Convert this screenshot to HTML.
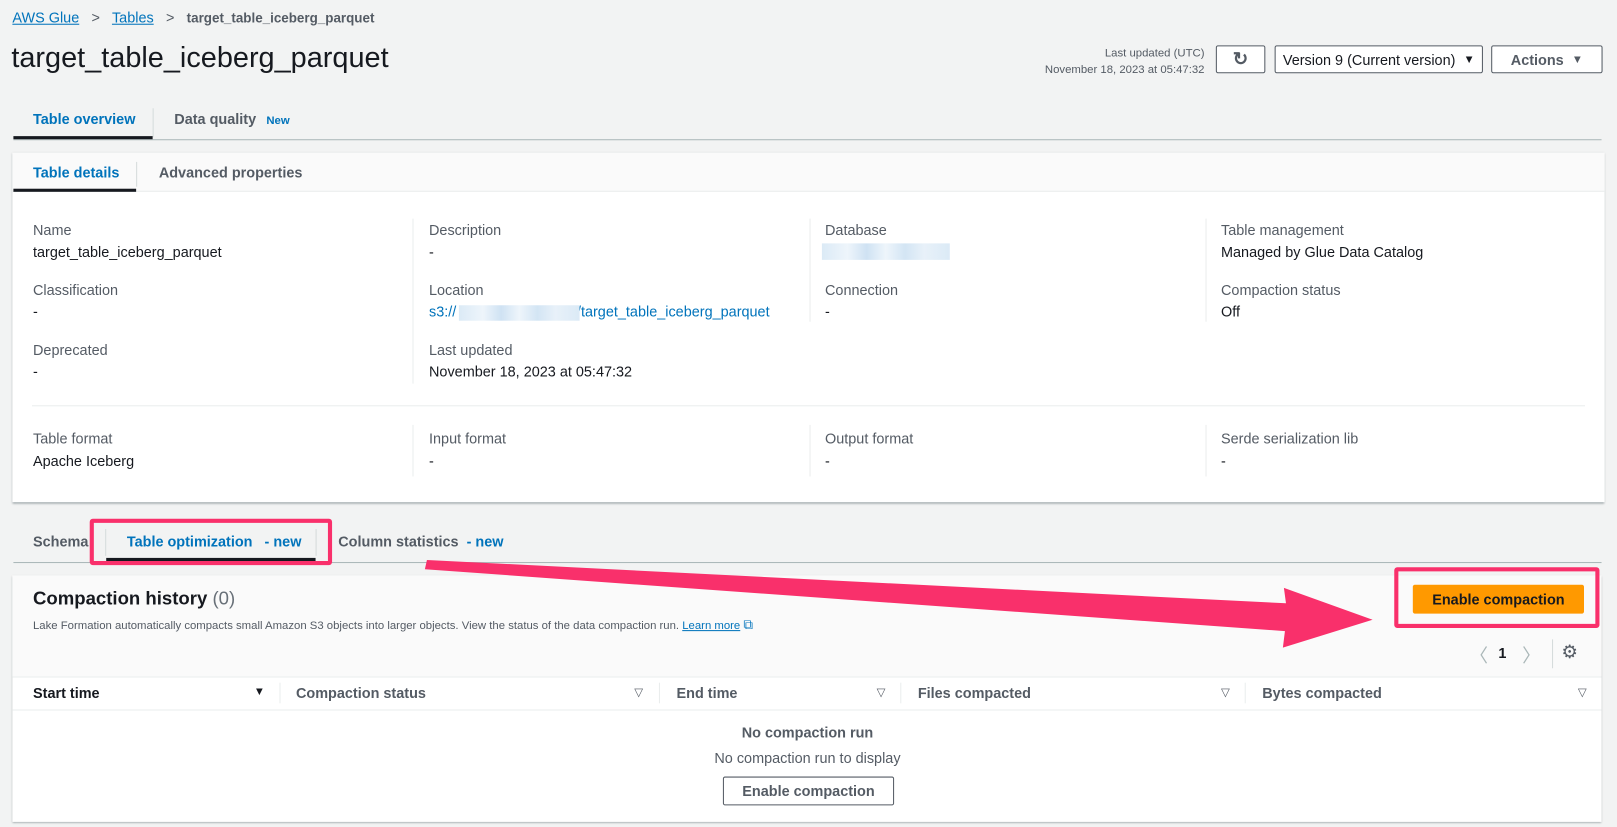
<!DOCTYPE html>
<html><head><meta charset="utf-8"><style>
*{box-sizing:border-box;margin:0;padding:0}
body{width:1617px;height:827px;background:#f2f3f3;font-family:"Liberation Sans",sans-serif;font-size:14px;color:#16191f;position:relative;overflow:hidden}
#w{position:absolute;left:0;top:0;width:1568px;height:802px;transform:scale(1.03125);transform-origin:0 0}
.a{position:absolute;white-space:nowrap}
.lnk{color:#0073bb;text-decoration:underline}
.b{font-weight:bold}
.g{color:#545b64}
.blue{color:#0073bb}
.lbl{color:#545b64;font-size:14px}
.btn{position:absolute;border:1px solid #545b64;background:#fff;border-radius:2px;font-weight:bold;color:#545b64;display:flex;align-items:center;justify-content:center}
.sep{position:absolute;width:1px;background:#d5dbdb}
.blur{position:absolute;background:linear-gradient(90deg,#dbeaf6,#eef5fb 20%,#cfe2f3 35%,#eef5fb 50%,#d3e5f4 65%,#e8f1f9 80%,#dbeaf6);}
</style></head><body><div id="w">
<div class="a" style="left:12px;top:9px"><span class="lnk">AWS Glue</span> <span class="g" style="margin:0 8px">&gt;</span> <span class="lnk">Tables</span> <span class="g" style="margin:0 8px">&gt;</span> <span class="g b" style="font-size:13px">target_table_iceberg_parquet</span></div>
<div class="a" style="left:11px;top:40px;font-size:28px">target_table_iceberg_parquet</div>
<div class="a g" style="right:400px;top:44px;font-size:11px;text-align:right;line-height:16px">Last updated (UTC)<br>November 18, 2023 at 05:47:32</div>
<div class="btn" style="left:1179px;top:44px;width:48px;height:27px;font-size:18px">&#8635;</div>
<div class="btn" style="left:1236px;top:44px;width:202px;height:27px;font-weight:normal;color:#16191f">Version 9 (Current version) &nbsp;<span style="font-size:11px">&#9660;</span></div>
<div class="btn" style="left:1446px;top:44px;width:108px;height:27px">Actions &nbsp;<span style="font-size:11px">&#9660;</span></div>

<div class="a b blue" style="left:32px;top:107px">Table overview</div>
<div class="sep" style="left:148px;top:105px;height:28px"></div>
<div class="a b g" style="left:169px;top:107px">Data quality <span class="blue" style="font-size:11px;margin-left:6px">New</span></div>
<div class="a" style="left:13px;top:135px;width:1540px;height:1px;background:#aab7b8"></div>
<div class="a" style="left:13px;top:132px;width:135px;height:3px;background:#16191f"></div>

<div class="a" style="left:12px;top:148px;width:1544px;height:339px;background:#fff;box-shadow:0 1px 2px rgba(0,28,36,.4);border-top:1px solid #eaeded"></div>
<div class="a" style="left:12px;top:148px;width:1544px;height:38px;background:#fafafa;border-bottom:1px solid #eaeded"></div>
<div class="a b blue" style="left:32px;top:159px">Table details</div>
<div class="sep" style="left:132px;top:157px;height:24px"></div>
<div class="a b g" style="left:154px;top:159px">Advanced properties</div>
<div class="a" style="left:13px;top:183px;width:119px;height:3px;background:#16191f"></div>

<div class="sep" style="left:400px;top:212px;height:160px;background:#eaeded"></div>
<div class="sep" style="left:785px;top:212px;height:100px;background:#eaeded"></div>
<div class="sep" style="left:1169px;top:212px;height:100px;background:#eaeded"></div>
<div class="sep" style="left:400px;top:412px;height:50px;background:#eaeded"></div>
<div class="sep" style="left:785px;top:412px;height:50px;background:#eaeded"></div>
<div class="sep" style="left:1169px;top:412px;height:50px;background:#eaeded"></div>

<div class="a lbl" style="left:32px;top:215px">Name</div><div class="a" style="left:32px;top:236px">target_table_iceberg_parquet</div>
<div class="a lbl" style="left:416px;top:215px">Description</div><div class="a" style="left:416px;top:236px">-</div>
<div class="a lbl" style="left:800px;top:215px">Database</div><div class="blur" style="left:797px;top:236px;width:124px;height:16px"></div>
<div class="a lbl" style="left:1184px;top:215px">Table management</div><div class="a" style="left:1184px;top:236px">Managed by Glue Data Catalog</div>

<div class="a lbl" style="left:32px;top:273px">Classification</div><div class="a" style="left:32px;top:294px">-</div>
<div class="a lbl" style="left:416px;top:273px">Location</div><div class="a blue" style="left:416px;top:294px">s3://<span style="display:inline-block;width:117px"></span>/target_table_iceberg_parquet</div><div class="blur" style="left:445px;top:296px;width:117px;height:15px"></div>
<div class="a lbl" style="left:800px;top:273px">Connection</div><div class="a" style="left:800px;top:294px">-</div>
<div class="a lbl" style="left:1184px;top:273px">Compaction status</div><div class="a" style="left:1184px;top:294px">Off</div>

<div class="a lbl" style="left:32px;top:331px">Deprecated</div><div class="a" style="left:32px;top:352px">-</div>
<div class="a lbl" style="left:416px;top:331px">Last updated</div><div class="a" style="left:416px;top:352px">November 18, 2023 at 05:47:32</div>

<div class="a" style="left:31px;top:393px;width:1506px;height:1px;background:#eaeded"></div>
<div class="a lbl" style="left:32px;top:417px">Table format</div><div class="a" style="left:32px;top:439px">Apache Iceberg</div>
<div class="a lbl" style="left:416px;top:417px">Input format</div><div class="a" style="left:416px;top:439px">-</div>
<div class="a lbl" style="left:800px;top:417px">Output format</div><div class="a" style="left:800px;top:439px">-</div>
<div class="a lbl" style="left:1184px;top:417px">Serde serialization lib</div><div class="a" style="left:1184px;top:439px">-</div>

<div class="a b g" style="left:32px;top:517px">Schema</div>
<div class="sep" style="left:102px;top:513px;height:26px"></div>
<div class="a b blue" style="left:123px;top:517px">Table optimization &nbsp; - new</div>
<div class="sep" style="left:306px;top:513px;height:26px"></div>
<div class="a b g" style="left:328px;top:517px">Column statistics &nbsp;<span class="blue">- new</span></div>
<div class="a" style="left:13px;top:545px;width:1540px;height:1px;background:#aab7b8"></div>
<div class="a" style="left:103px;top:541px;width:203px;height:3px;background:#16191f"></div>
<div class="a" style="left:87px;top:503px;width:235px;height:45px;border:4px solid #f9306b;border-radius:3px"></div>

<div class="a" style="left:12px;top:558px;width:1541px;height:239px;background:#fff;box-shadow:0 1px 2px rgba(0,28,36,.4)"></div>
<div class="a" style="left:12px;top:558px;width:1541px;height:98px;background:#fafafa"></div>
<div class="a b" style="left:32px;top:570px;font-size:18px">Compaction history <span style="font-weight:normal;color:#687078">(0)</span></div>
<div class="a g" style="left:32px;top:598px;font-size:11px">Lake Formation automatically compacts small Amazon S3 objects into larger objects. View the status of the data compaction run. <span class="lnk">Learn more</span> <span class="blue" style="font-size:13px">&#10697;</span></div>
<div class="a" style="left:1370px;top:567px;width:166px;height:28px;background:#ff9900;border-radius:2px;font-weight:bold;font-size:14px;display:flex;align-items:center;justify-content:center">Enable compaction</div>
<div class="a" style="left:1352px;top:550px;width:199px;height:59px;border:4px solid #f9306b;border-radius:3px"></div>
<div class="a" style="left:1425px;top:622px;color:#aab7b8;font-size:18px">&#12296;</div>
<div class="a b" style="left:1453px;top:625px">1</div>
<div class="a" style="left:1476px;top:622px;color:#aab7b8;font-size:18px">&#12297;</div>
<div class="sep" style="left:1505px;top:620px;height:28px"></div>
<div class="a" style="left:1514px;top:622px;font-size:18px;color:#545b64">&#9881;</div>

<div class="a" style="left:12px;top:656px;width:1541px;height:1px;background:#eaeded"></div>
<div class="a" style="left:12px;top:688px;width:1541px;height:1px;background:#eaeded"></div>
<div class="a b" style="left:32px;top:664px">Start time</div><div class="a" style="left:246px;top:665px;font-size:11px">&#9660;</div>
<div class="sep" style="left:271px;top:662px;height:20px;background:#eaeded"></div>
<div class="a b" style="left:287px;top:664px;color:#545b64">Compaction status</div><div class="a g" style="left:615px;top:665px;font-size:11px">&#9661;</div>
<div class="sep" style="left:639px;top:662px;height:20px;background:#eaeded"></div>
<div class="a b" style="left:656px;top:664px;color:#545b64">End time</div><div class="a g" style="left:850px;top:665px;font-size:11px">&#9661;</div>
<div class="sep" style="left:873px;top:662px;height:20px;background:#eaeded"></div>
<div class="a b" style="left:890px;top:664px;color:#545b64">Files compacted</div><div class="a g" style="left:1184px;top:665px;font-size:11px">&#9661;</div>
<div class="sep" style="left:1207px;top:662px;height:20px;background:#eaeded"></div>
<div class="a b" style="left:1224px;top:664px;color:#545b64">Bytes compacted</div><div class="a g" style="left:1530px;top:665px;font-size:11px">&#9661;</div>

<div class="a b g" style="left:683px;width:200px;text-align:center;top:702px">No compaction run</div>
<div class="a g" style="left:663px;width:240px;text-align:center;top:727px">No compaction run to display</div>
<div class="btn" style="left:701px;top:753px;width:166px;height:28px">Enable compaction</div>

<svg class="a" style="left:0;top:0" width="1568" height="802"><polygon points="414,543 1247,585 1245,570 1331,601 1244,628 1246,612 412,552" fill="#f9306b"/></svg>
</div></body></html>
